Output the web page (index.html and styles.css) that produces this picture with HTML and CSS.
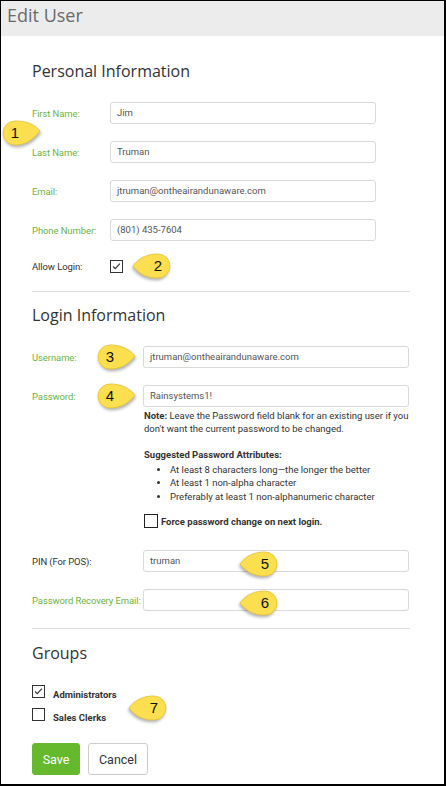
FILE: index.html
```html
<!DOCTYPE html>
<html lang="en">
<head>
  <meta charset="UTF-8" />
  <meta name="viewport" content="width=device-width, initial-scale=1.0" />
  <title>Edit User</title>
  <link rel="stylesheet" href="styles.css">
</head>
<body>
  <div class="page">
    <div class="topbar">Edit User</div>

    <div class="content">
      <h2 class="section-title first">Personal Information</h2>

      <div class="fields">
        <div class="row">
          <label class="lbl green">First Name:</label>
          <div class="input">Jim</div>
        </div>
        <div class="row">
          <label class="lbl green">Last Name:</label>
          <div class="input">Truman</div>
        </div>
        <div class="row">
          <label class="lbl green">Email:</label>
          <div class="input">jtruman@ontheairandunaware.com</div>
        </div>
        <div class="row">
          <label class="lbl green">Phone Number:</label>
          <div class="input">(801) 435-7604</div>
        </div>
      </div>

      <div class="row allow">
        <label class="lbl">Allow Login:</label>
        <span class="check on"><svg viewBox="0 0 13 13"><polyline points="2.5,6.5 5,9 10.5,3" /></svg></span>
      </div>

      <hr class="divider" />

      <h2 class="section-title">Login Information</h2>

      <div class="fields wide">
        <div class="row">
          <label class="lbl green">Username:</label>
          <div class="input">jtruman@ontheairandunaware.com</div>
        </div>
        <div class="row">
          <label class="lbl green">Password:</label>
          <div class="input">Rainsystems1!</div>
        </div>
      </div>

      <div class="help">
        <p><b>Note:</b> Leave the Password field blank for an existing user if you don't want the current password to be changed.</p>
        <p class="suggest"><b>Suggested Password Attributes:</b></p>
        <ul>
          <li>At least 8 characters long—the longer the better</li>
          <li>At least 1 non-alpha character</li>
          <li>Preferably at least 1 non-alphanumeric character</li>
        </ul>
        <div class="force">
          <span class="check big"></span>
          <b>Force password change on next login.</b>
        </div>
      </div>

      <div class="fields wide lower">
        <div class="row">
          <label class="lbl">PIN (For POS):</label>
          <div class="input">truman</div>
        </div>
        <div class="row">
          <label class="lbl green">Password Recovery Email:</label>
          <div class="input"></div>
        </div>
      </div>

      <hr class="divider second" />

      <h2 class="section-title">Groups</h2>

      <div class="groups">
        <div class="group">
          <span class="check on"><svg viewBox="0 0 13 13"><polyline points="2.5,6.5 5,9 10.5,3" /></svg></span>
          <b>Administrators</b>
        </div>
        <div class="group">
          <span class="check"></span>
          <b>Sales Clerks</b>
        </div>
      </div>

      <div class="buttons">
        <button class="btn save">Save</button>
        <button class="btn cancel">Cancel</button>
      </div>
    </div>

    <!-- numbered callouts drawn over the form -->
    <div class="callout c1"><svg viewBox="0 0 40 26"><path d="M38 11 C31 3 23 1 13 1 A12 12 0 0 0 13 25 C23 25 31 20 38 11 Z" /></svg><span>1</span></div>
    <div class="callout left c2"><svg viewBox="0 0 40 26"><path d="M38 13 C31 4 23 1 13 1 A12 12 0 0 0 13 25 C23 25 31 22 38 13 Z" /></svg><span>2</span></div>
    <div class="callout c3"><svg viewBox="0 0 40 26"><path d="M38 12 C31 4 23 1 13 1 A12 12 0 0 0 13 25 C23 25 31 21 38 12 Z" /></svg><span>3</span></div>
    <div class="callout c4"><svg viewBox="0 0 40 26"><path d="M38 12 C31 4 23 1 13 1 A12 12 0 0 0 13 25 C23 25 31 21 38 12 Z" /></svg><span>4</span></div>
    <div class="callout left c5"><svg viewBox="0 0 40 26"><path d="M38 13 C31 4 23 1 13 1 A12 12 0 0 0 13 25 C23 25 31 22 38 13 Z" /></svg><span>5</span></div>
    <div class="callout left c6"><svg viewBox="0 0 40 26"><path d="M38 13 C31 4 23 1 13 1 A12 12 0 0 0 13 25 C23 25 31 22 38 13 Z" /></svg><span>6</span></div>
    <div class="callout left c7"><svg viewBox="0 0 40 26"><path d="M38 13 C31 4 23 1 13 1 A12 12 0 0 0 13 25 C23 25 31 22 38 13 Z" /></svg><span>7</span></div>
  </div>
</body>
</html>
```

FILE: styles.css
```css
body {
  margin: 0;
  font-family: Roboto, "Liberation Sans", sans-serif;
  background: white;
}
.page {
  position: relative;
  height: 786px;
  box-sizing: border-box;
  border: 1px solid #000;
  border-right-width: 2px;
  border-bottom-width: 2px;
  overflow: hidden;
}
.topbar {
  height: 35px;
  line-height: 29px;
  padding-left: 6px;
  background: #ececec;
  font-family: "Open Sans", sans-serif;
  font-size: 18px;
  color: #6a6a6a;
}
.content {
  padding: 0 34px 0 31px;
}
.section-title {
  margin: 0;
  font-family: "Open Sans", sans-serif;
  font-weight: normal;
  font-size: 16px;
  line-height: 20px;
  color: #333;
}
.section-title.first {
  margin-top: 25px;
}
.fields {
  display: flex;
  flex-direction: column;
  gap: 17px;
  margin-top: 21px;
}
.row {
  display: flex;
  align-items: center;
}
.lbl {
  width: 78px;
  flex: none;
  font-size: 9.5px;
  color: #333;
  white-space: nowrap;
  letter-spacing: -0.1px;
}
.lbl.green {
  color: #6db33f;
}
.wide .lbl {
  width: 111px;
}
.input {
  width: 266px;
  height: 22px;
  box-sizing: border-box;
  border: 1px solid #d9d9d9;
  border-radius: 3px;
  padding-left: 6px;
  font-size: 9.5px;
  line-height: 20px;
  color: #555;
}
.allow {
  margin-top: 19px;
}
.check {
  width: 11px;
  height: 11px;
  border: 1px solid #333;
  display: inline-block;
  flex: none;
}
.check svg {
  display: block;
  width: 11px;
  height: 11px;
}
.check polyline {
  fill: none;
  stroke: #333;
  stroke-width: 1.3;
}
.check.big {
  width: 12px;
  height: 12px;
  border-color: #222;
}
.divider {
  border: 0;
  border-top: 1px solid #ddd;
  margin: 18px 0 13px;
}
.divider.second {
  margin: 17px 0 14px;
}
.help {
  margin-left: 112px;
  margin-top: 2px;
  font-size: 9.5px;
  line-height: 13.2px;
  color: #333;
}
.help p {
  margin: 0;
}
.help .suggest {
  margin-top: 13px;
}
.help ul {
  margin: 1px 0 0;
  padding-left: 26px;
  line-height: 13.5px;
}
.force {
  display: flex;
  align-items: flex-end;
  gap: 3px;
  margin-top: 11px;
}
.force b {
  line-height: 12px;
}
.lower {
  margin-top: 22px;
}
.groups {
  margin-top: 22px;
  display: flex;
  flex-direction: column;
  gap: 10px;
}
.group {
  display: flex;
  align-items: center;
  gap: 8px;
  font-size: 9.5px;
  color: #333;
}
.group b {
  position: relative;
  top: 3px;
}
.buttons {
  display: flex;
  gap: 8px;
  margin-top: 22px;
}
.btn {
  height: 32px;
  border-radius: 3px;
  font-family: Roboto, sans-serif;
  font-size: 12.5px;
  cursor: pointer;
}
.save {
  width: 48px;
  background: #66b82c;
  border: 1px solid #66b82c;
  color: white;
}
.cancel {
  width: 60px;
  background: white;
  border: 1px solid #ccc;
  color: #333;
}
.callout {
  position: absolute;
  width: 40px;
  height: 26px;
}
.callout svg {
  width: 40px;
  height: 26px;
  display: block;
  filter: drop-shadow(1px 2px 1.5px rgba(0,0,0,0.3));
}
.callout path {
  fill: #fbdf4e;
  stroke: #e7c235;
  stroke-width: 0.8;
}
.callout.left svg {
  transform: scaleX(-1);
}
.callout span {
  position: absolute;
  top: 0;
  left: 0;
  width: 26px;
  line-height: 26px;
  text-align: center;
  font-family: "Liberation Sans", sans-serif;
  font-size: 15px;
  color: #111;
}
.callout.left span {
  left: 14px;
}
.c1 { left: 1px; top: 119px; }
.c2 { left: 130px; top: 252px; }
.c3 { left: 96px; top: 343px; }
.c4 { left: 96px; top: 382px; }
.c5 { left: 237px; top: 550px; }
.c6 { left: 237px; top: 589px; }
.c7 { left: 126px; top: 694px; }
```
